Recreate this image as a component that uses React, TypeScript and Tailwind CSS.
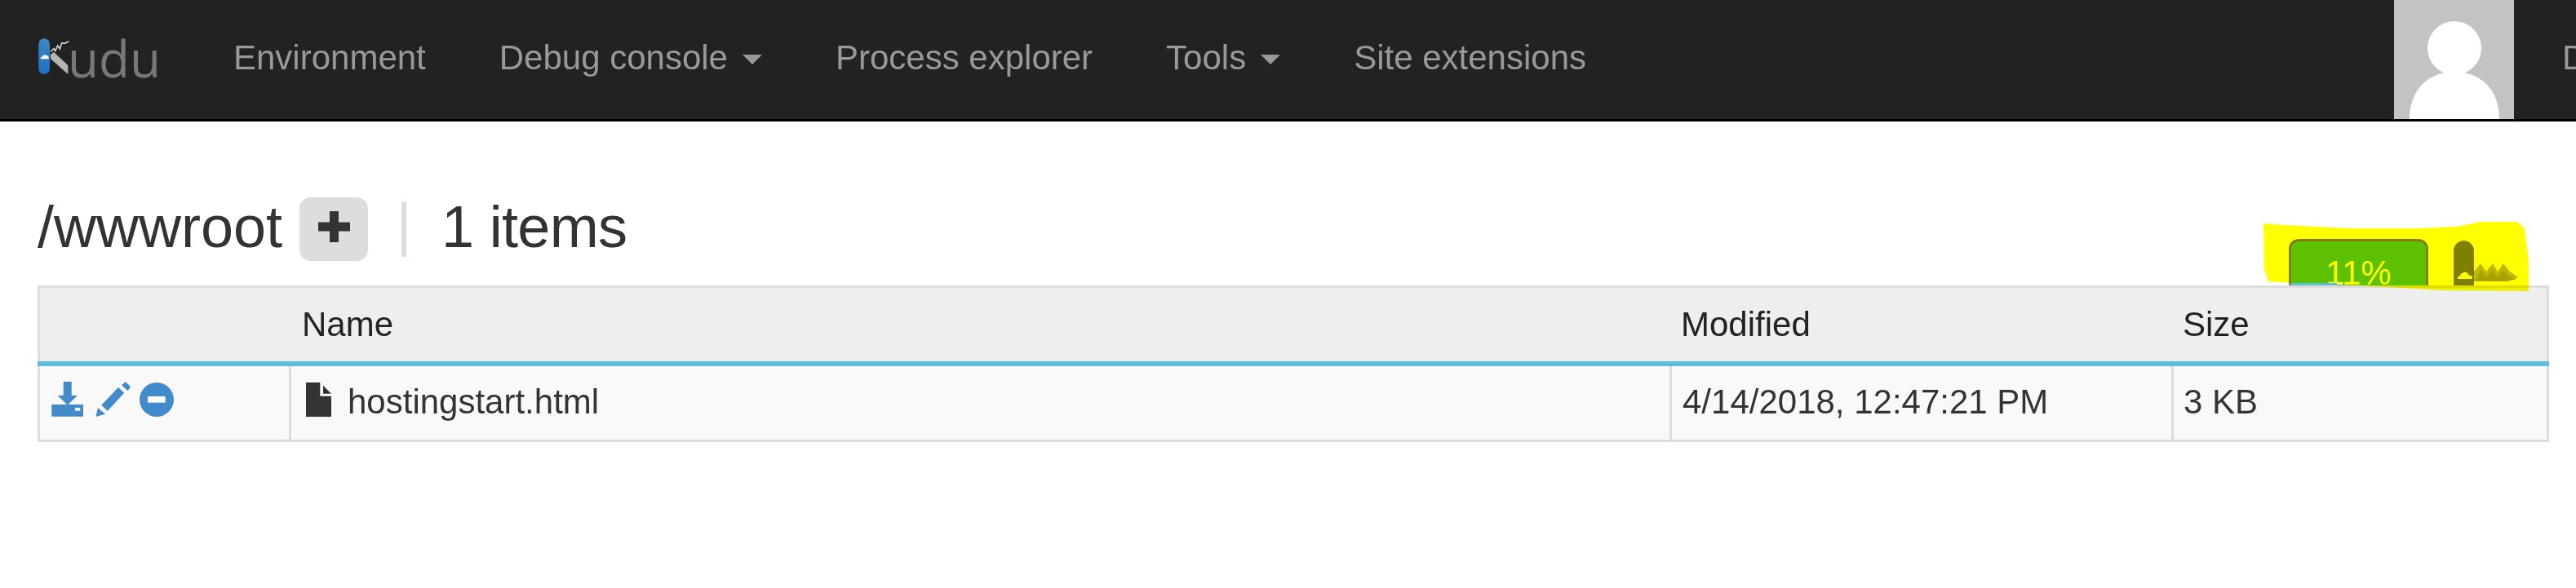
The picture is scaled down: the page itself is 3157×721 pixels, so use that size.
import React from "react";

const font = "font-['Liberation_Sans',Arial,sans-serif]";

function Caret() {
  return <span className="ml-[18px] mt-[20px] h-0 w-0 border-x-[12px] border-t-[12px] border-x-transparent border-t-[#999]" />;
}

function NavItem({ label, caret }: { label: string; caret?: boolean }) {
  return (
    <div className="flex items-start px-[45px] pt-[47px] leading-[48px] whitespace-nowrap">
      <span>{label}</span>
      {caret && <Caret />}
    </div>
  );
}

function KuduLogo() {
  return (
    <svg viewBox="47 40 36 55" className="h-[55px] w-[36px] shrink-0 overflow-visible">
      <defs>
        <linearGradient id="pill" x1="0" y1="0" x2="0" y2="1">
          <stop offset="0" stopColor="#3f87c9" />
          <stop offset="1" stopColor="#1d70bd" />
        </linearGradient>
      </defs>
      <rect x="47.3" y="47.3" width="13.7" height="43.7" rx="6.8" fill="url(#pill)" />
      <path d="M50 72.3c-.8-1.6.4-2.8 1.8-2.6.5-1.8 3-3.4 4.7-1.6 1.6-.4 3 .8 3.2 2.6.2.8-.2 1.6-1 1.6z" fill="#fff" />
      <path d="M61.7 67 66 64 83.3 80v11L62 72z" fill="#b5b5b6" />
      <path d="M62 63.5 66 59.5 67.7 62.5 70.7 56 73.3 60 75.7 52.7 79 53.3 84.3 50.7" fill="none" stroke="#d4d4d4" strokeWidth="1.6" />
    </svg>
  );
}

function DownloadIcon() {
  return (
    <svg viewBox="63 468 39 43" className="h-[43px] w-[39px] fill-[#428bca]">
      <path d="M77.7 468h10v17H95l-12.3 11.7L70.7 485h7z" />
      <path d="M63.3 496H102.300v14.700H63.300zM92 500v3.700h6.300V500z" fillRule="evenodd" />
    </svg>
  );
}

function PencilIcon() {
  return (
    <svg viewBox="117 468 43 43" className="ml-[15px] h-[43px] w-[43px] fill-[#428bca]">
      <path d="M145 475l7.300 6.700L131.700 504l-7.400-7.300z" />
      <path d="M154 468.300l6 6-3.300 5-7.700-7z" />
      <path d="M120 500l9 7.700-11.700 3.300z" />
    </svg>
  );
}

function MinusIcon() {
  return (
    <svg viewBox="171 469 42 42" className="ml-[11px] mt-[1px] h-[42px] w-[42px]">
      <circle cx="192" cy="490" r="21" fill="#428bca" />
      <rect x="181" y="486" width="21.700" height="7.700" fill="#fff" />
    </svg>
  );
}

function FileIcon() {
  return (
    <svg viewBox="375 469 31 42" className="h-[42px] w-[31px] shrink-0 fill-[#333]">
      <path d="M375 469h17.300v16.700H406V511h-31z" />
      <path d="M396 472.700l10 10h-10z" />
    </svg>
  );
}

export default function App() {
  return (
    <div className={`relative h-[721px] w-[3157px] overflow-hidden bg-white ${font}`}>
      <nav className="flex h-[149px] border-b-[3px] border-black bg-[#222] text-[42px] text-[#999]">
        <div className="flex w-[241px] shrink-0 items-start pl-[47px] pt-[40px]">
          <KuduLogo />
          <span className="-mt-[10px] font-['Open_Sans',sans-serif] text-[62px] leading-[82px] text-[#77787b]">udu</span>
        </div>
        <NavItem label="Environment" />
        <NavItem label="Debug console" caret />
        <NavItem label="Process explorer" />
        <NavItem label="Tools" caret />
        <NavItem label="Site extensions" />

        <div className="ml-auto h-[146px] w-[147px] shrink-0 bg-[#c3c3c3]">
          <svg viewBox="0 0 147 146" className="h-full w-full">
            <circle cx="74" cy="59" r="33" fill="#fff" />
            <path d="M19 146C19 110 42 88 74 88s55 22 55 58z" fill="#fff" />
          </svg>
        </div>
        <div className="w-[76px] shrink-0 overflow-hidden pl-[59px] pt-[47px] leading-[48px]">D</div>
      </nav>

      <main className="pl-[46px] pr-[33px]">
        <div className="flex h-[201px] items-start pt-[88px] text-[72px] leading-[83px] text-[#333]">
          <h2>/wwwroot</h2>
          <button className="ml-[21px] mt-[5px] flex h-[78px] w-[84px] items-center justify-center rounded-[14px] bg-[#ddd]">
            <svg viewBox="0 0 39 38" className="-mt-[6px] h-[38px] w-[39px] fill-[#333]">
              <path d="M14 0h11v13.500h14v11H25V38H14V24.500H0v-11h14z" />
            </svg>
          </button>
          <span className="ml-[41px] mt-[10px] h-[68px] w-[6px] bg-[#ddd]" />
          <span className="ml-[43px] tracking-[-0.7px]">1 items</span>
        </div>

        <div className="text-[42px] leading-[48px]">
          <div className="grid h-[93px] grid-cols-[308px_1692px_615px_457px] border-x-[3px] border-t-[3px] border-[#ddd] bg-[#eee] pt-[21px] text-[#222]">
            <div />
            <div className="pl-[13px]">Name</div>
            <div className="pl-[11px]">Modified</div>
            <div className="pl-[11px]">Size</div>
          </div>
          <div className="h-[6px] bg-[#5bc0de]" />
          <div className="grid h-[93px] grid-cols-[308px_1692px_615px_457px] border-x-[3px] border-b-[3px] border-[#ddd] bg-[#f9f9f9] text-[#333]">
            <div className="flex items-start border-r-[3px] border-[#ddd] pl-[14px] pt-[19px]">
              <DownloadIcon />
              <PencilIcon />
              <MinusIcon />
            </div>
            <div className="flex items-start border-r-[3px] border-[#ddd] pl-[18px] pt-[20px]">
              <FileIcon />
              <span className="ml-[20px]">hostingstart.html</span>
            </div>
            <div className="border-r-[3px] border-[#ddd] pl-[13px] pt-[20px]">4/14/2018, 12:47:21 PM</div>
            <div className="pl-[12px] pt-[20px]">3 KB</div>
          </div>
        </div>
      </main>

      {/* progress box and kudu mark, highlighted over with a yellow marker */}
      <div className="absolute left-[2805px] top-[293px] h-[57px] w-[171px] overflow-hidden rounded-t-[12px] border-x-[3px] border-t-[3px] border-[#808080] bg-[#5dc000] text-center text-[42px] leading-[48px] text-white">
        <div className="pt-[15px]">11%</div>
        <div className="absolute bottom-0 left-0 h-[3px] w-[56px] bg-[#5bc0de]" />
      </div>
      <svg viewBox="3000 290 90 60" className="absolute left-[3000px] top-[290px] h-[60px] w-[90px]">
        <path d="M3007 350v-42.500a12.500 12.500 0 0 1 25 0V350z" fill="#808080" />
        <path d="M3012 342c-1-2 .5-3.500 2.500-3.300.8-2.800 5-6 8.500-4.500 1.500 1 2.300 2 2.500 3.300 2.500-.5 4.500 1 4.500 3 0 1.500-1 1.500-2 1.500z" fill="#fff" />
        <path d="M3032 345v-12l8-10 7 10 8-10 6 10 7-10 7 9 11 8-6 3-6 2z" fill="#c0b800" />
        <path d="M3034 345l6-14 7 9 8-9 6 9 7-8 7 7 9 4-6 0-6 2z" fill="#a8a200" />
      </svg>
      <svg viewBox="2770 268 335 92" className="absolute left-[2770px] top-[268px] h-[92px] w-[335px] mix-blend-multiply">
        <path
          d="M2774 274 2800 276 2880 280 2960 280 3010 278 3040 272 3085 272 3094 280 3099 320 3099 357 2993 356 2960 354 2890 350 2862 347 2805 347 2780 345 2775 330z"
          fill="#ffff00"
        />
      </svg>
    </div>
  );
}
